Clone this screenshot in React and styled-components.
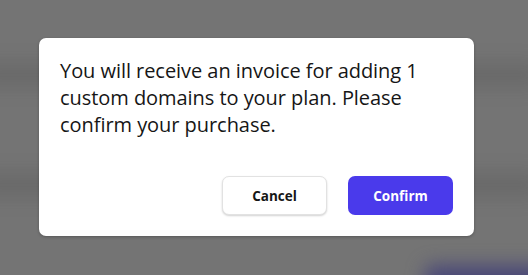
import React from "react";
import styled, { createGlobalStyle } from "styled-components";

const Global = createGlobalStyle`
  html, body { margin: 0; padding: 0; }
  body { width: 528px; height: 275px; overflow: hidden; background: #747474; font-family: "Open Sans", "Liberation Sans", sans-serif; }
`;

const Backdrop = styled.div`
  position: relative;
  width: 528px;
  height: 275px;
  overflow: hidden;
  background: #747474;
  display: flex;
  align-items: flex-start;
  justify-content: flex-start;
  padding: 38px 0 0 39px;
  box-sizing: border-box;
`;

const Blur = styled.div`
  position: absolute;
  filter: blur(9px);
  border-radius: 8px;
`;

const Dialog = styled.div`
  position: relative;
  width: 435px;
  height: 198px;
  box-sizing: border-box;
  background: #ffffff;
  border-radius: 7px;
  box-shadow: 0 1px 3px rgba(0, 0, 0, 0.25);
  padding: 19px 21px 21px 21px;
  display: flex;
  flex-direction: column;
  justify-content: space-between;
`;

const Message = styled.p`
  margin: 0;
  font-family: "Open Sans", "Liberation Sans", sans-serif;
  font-size: 20px;
  line-height: 27px;
  color: #161616;
  letter-spacing: -0.05px;
`;

const Actions = styled.div`
  display: flex;
  justify-content: flex-end;
  gap: 21px;
`;

const Button = styled.button`
  width: 105px;
  height: 39px;
  border-radius: 7px;
  font-family: "Open Sans", "Liberation Sans", sans-serif;
  font-weight: 700;
  font-size: 13.5px;
  cursor: pointer;
  box-sizing: border-box;
  border: ${(p) => (p.$primary ? "none" : "1px solid #e2e2e2")};
  background: ${(p) => (p.$primary ? "#4a3aeb" : "#ffffff")};
  color: ${(p) => (p.$primary ? "#ffffff" : "#161616")};
  box-shadow: ${(p) => (p.$primary ? "none" : "0 1px 2px rgba(0,0,0,0.18)")};
`;

export default function App() {
  return (
    <>
      <Global />
      <Backdrop>
        <Blur style={{ left: -20, top: 62, width: 560, height: 26, background: "rgba(60,60,60,0.18)" }} />
        <Blur style={{ left: -20, top: 172, width: 560, height: 26, background: "rgba(60,60,60,0.18)" }} />
        <Blur style={{ left: 425, top: 265, width: 140, height: 30, background: "#4a4878" }} />
        <Dialog>
          <Message>
            You will receive an invoice for adding 1 custom domains to your plan. Please confirm your purchase.
          </Message>
          <Actions>
            <Button>Cancel</Button>
            <Button $primary>Confirm</Button>
          </Actions>
        </Dialog>
      </Backdrop>
    </>
  );
}
